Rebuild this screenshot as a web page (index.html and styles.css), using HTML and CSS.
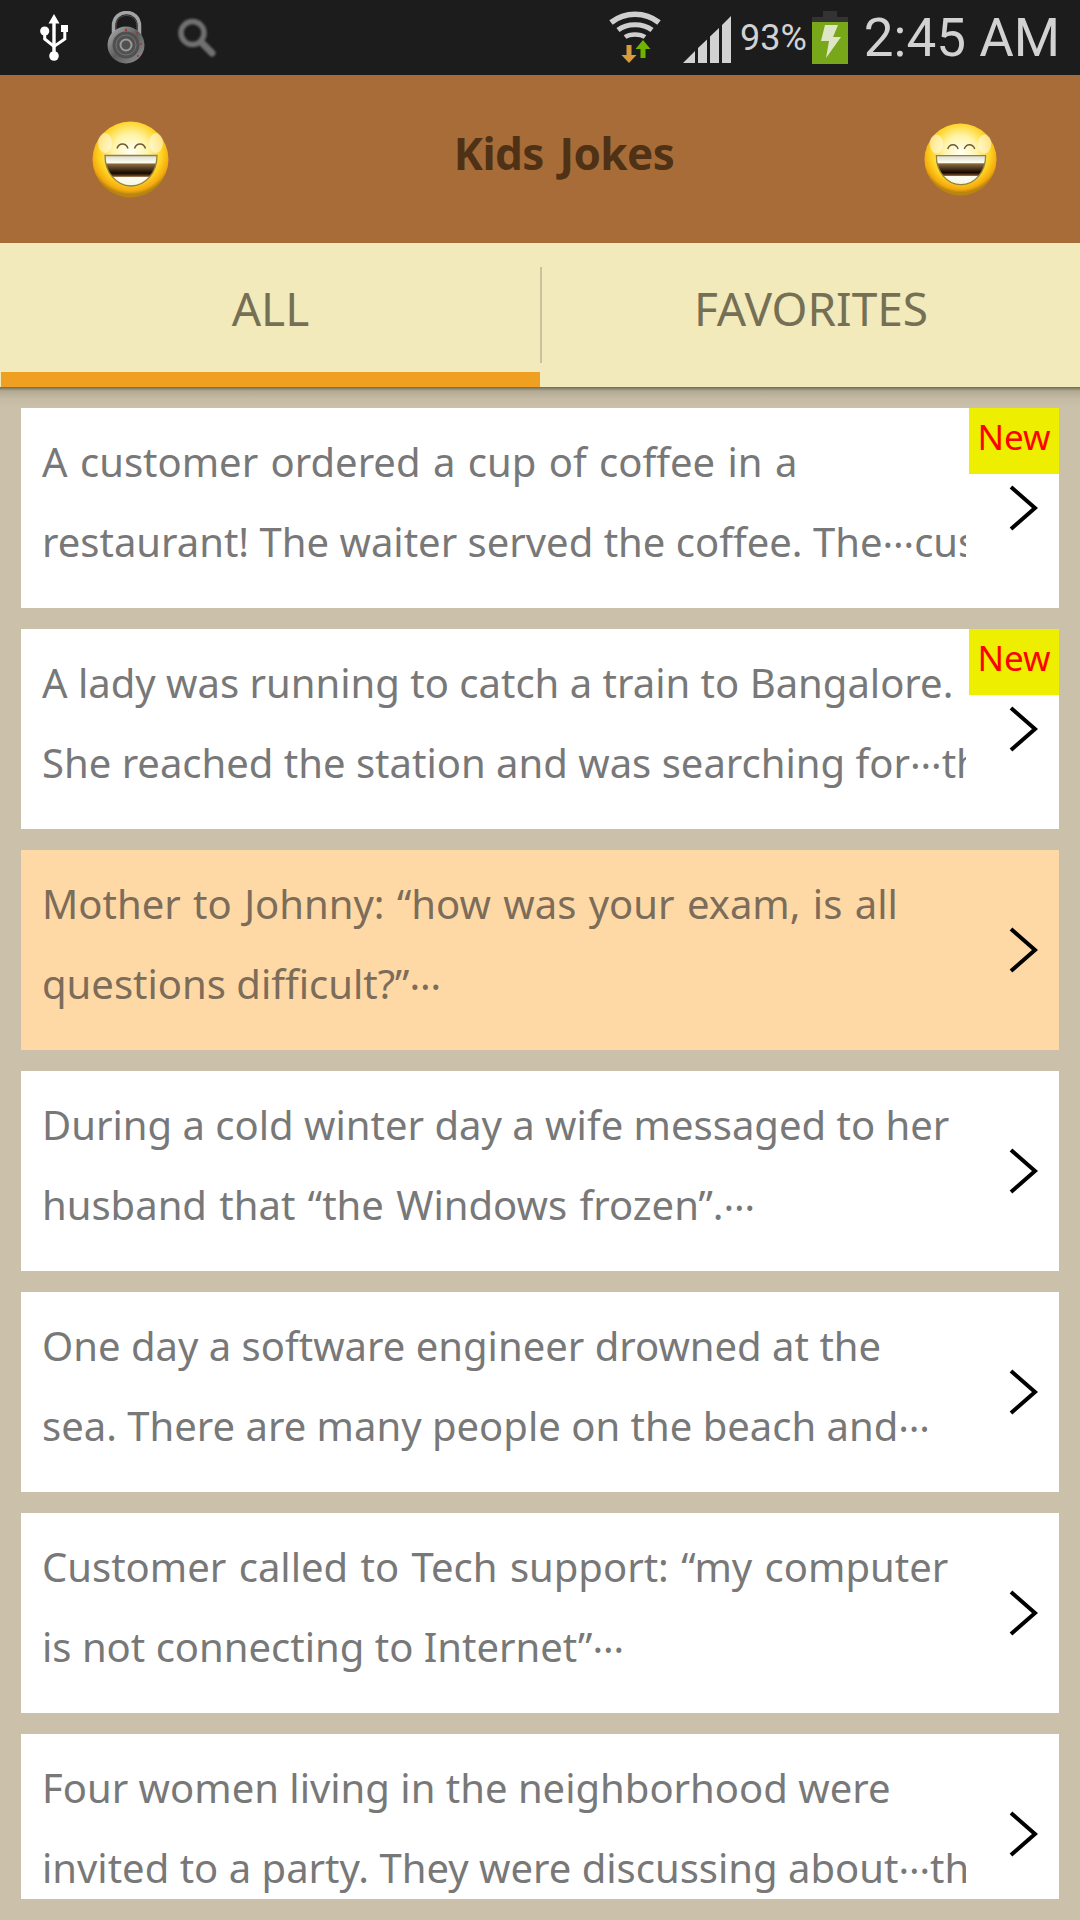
FILE: index.html
```html
<!doctype html>
<html lang="en">
  <head>
    <meta charset="utf-8">
    <title>Kids Jokes</title>
    <link rel="stylesheet" href="styles.css">
  </head>
  <body>

    <svg class="defs" width="0" height="0">
      <defs>
        <radialGradient id="faceFill" cx="50%" cy="40%" r="56%">
          <stop offset="0" stop-color="#fffff4"/>
          <stop offset="0.42" stop-color="#fff4a8"/>
          <stop offset="0.74" stop-color="#ffd21f"/>
          <stop offset="0.92" stop-color="#f4a90e"/>
          <stop offset="1" stop-color="#b98510"/>
        </radialGradient>
        <linearGradient id="mouthFill" x1="0" y1="0" x2="0" y2="1">
          <stop offset="0" stop-color="#dcdcd4"/>
          <stop offset="0.24" stop-color="#fdfdf0"/>
          <stop offset="0.28" stop-color="#8a6a40"/>
          <stop offset="0.58" stop-color="#140800"/>
          <stop offset="0.68" stop-color="#7a4a20"/>
          <stop offset="0.72" stop-color="#fdfdf0"/>
          <stop offset="1" stop-color="#f6f6e4"/>
        </linearGradient>
        <linearGradient id="lockFill" x1="0" y1="0" x2="1" y2="1">
          <stop offset="0" stop-color="#b4b4b4"/>
          <stop offset="0.5" stop-color="#5c5c5c"/>
          <stop offset="1" stop-color="#969696"/>
        </linearGradient>
        <symbol id="smiley" viewBox="0 0 77 77">
          <circle cx="38.500" cy="38.500" r="38" fill="url(#faceFill)"/>
          <ellipse cx="13" cy="22" rx="7" ry="10" fill="#fff" opacity=".5"/>
          <ellipse cx="64" cy="22" rx="7" ry="10" fill="#fff" opacity=".5"/>
          <path d="M25 27.500c2-6 9-6 11 0M42.500 27.500c2-6 9-6 11 0" fill="none" stroke="#6b5a3a" stroke-width="1.500"/>
          <path d="M13 34.500H65C65 51 54 65 39 65S13 51 13 34.500Z" fill="url(#mouthFill)" stroke="#93803c" stroke-width="1.300"/>
        </symbol>
      </defs>
    </svg>

    <div class="status-bar">
      <svg class="usb" width="32" height="50" viewBox="38 12 32 50">
        <path d="M54 14l-5.500 9.500h3.800V56h3.400V23.500h3.800Z" fill="#fff"/>
        <circle cx="54" cy="56" r="4.800" fill="#fff"/>
        <circle cx="44.700" cy="31" r="4.600" fill="#fff"/>
        <rect x="61" y="25" width="7" height="7" fill="#fff"/>
        <path d="M44.700 31v8l9.300 7.500 10.800-7.500v-8" fill="none" stroke="#fff" stroke-width="3"/>
      </svg>
      <svg class="lock" width="38" height="53" viewBox="107 11 38 53">
        <path d="M113.500 40V26c0-18 26-18 26 0v14" fill="none" stroke="#a4a4a4" stroke-width="3.500"/>
        <path d="M116 40V26c0-14 21-14 21 0v14" fill="none" stroke="#555" stroke-width="1"/>
        <circle cx="126" cy="45" r="18.500" fill="url(#lockFill)"/>
        <circle cx="126" cy="45" r="13.500" fill="#505050"/>
        <circle cx="126" cy="45" r="10" fill="none" stroke="#747474" stroke-width="1"/>
        <circle cx="126" cy="45" r="5.500" fill="none" stroke="#9a9a9a" stroke-width="2"/>
        <circle cx="126" cy="30" r="1.200" fill="#a33"/>
        <circle cx="141" cy="44" r="1" fill="#a33"/>
        <circle cx="137" cy="33" r="1" fill="#a33"/>
        <circle cx="138" cy="56" r="1" fill="#a33"/>
      </svg>
      <svg class="search" width="40" height="42" viewBox="177 17 40 42">
        <g fill="none" stroke="#7a7a7a" opacity=".9">
          <circle cx="192.500" cy="33" r="11.500" stroke-width="5.500"/>
          <path d="M202 43l10 10" stroke-width="7" stroke-linecap="round"/>
        </g>
      </svg>
      <div class="status-right">
        <svg class="wifi" width="54" height="54" viewBox="608 9 54 54">
          <g fill="none" stroke="#cfcfcf">
            <path d="M611 22.500c14-11 34-11 48 0" stroke-width="5.500"/>
            <path d="M618 30c9-7 25-7 34 0" stroke-width="5"/>
            <path d="M625 37c5-3.500 15-3.500 20 0" stroke-width="4.500"/>
          </g>
          <path d="M626.500 45h5v10h5l-7.500 8-7.500-8h5Z" fill="#d69a3f"/>
          <path d="M643 40l7.500 9h-5v9h-5v-9h-5Z" fill="#6fb300"/>
        </svg>
        <svg class="signal" width="48" height="47" viewBox="0 0 48 47">
          <path d="M0 47L12 35V47ZM15 47V32L24 23.500V47ZM27 47V20.500L36 12V47ZM39 47V9L48 0V47Z" fill="#d2d2d2"/>
        </svg>
        <span class="battery-text">93%</span>
        <svg class="battery" width="36" height="53" viewBox="0 0 36 53">
          <rect x="11" y="0" width="14" height="6" fill="#333"/>
          <rect x="0" y="6" width="36" height="5" fill="#333"/>
          <rect x="0" y="11" width="36" height="42" fill="#78a81a"/>
          <path d="M13 14h13l-5 12h8L14 47l3-17H9Z" fill="#dfe6c8"/>
        </svg>
        <span class="clock">2:45 AM</span>
      </div>
    </div>

    <header class="app-header">
      <svg class="smiley smiley-left"><use href="#smiley"/></svg>
      <h1 class="app-title">Kids Jokes</h1>
      <svg class="smiley smiley-right"><use href="#smiley"/></svg>
    </header>

    <nav class="tabs">
      <div class="tab tab-active">ALL</div>
      <div class="tab-divider"></div>
      <div class="tab">FAVORITES</div>
    </nav>

    <main class="joke-list">
      <article class="joke">
        <div class="joke-text">
          <p class="loose">A customer ordered a cup of coffee in a</p>
          <p>restaurant! The waiter served the coffee. The<span class="dots">…</span>customer</p>
        </div>
        <svg class="chevron" viewBox="0 0 30 46"><path d="M3 2l24 21L3 44" /></svg>
        <span class="badge">New</span>
      </article>
      <article class="joke">
        <div class="joke-text">
          <p>A lady was running to catch a train to Bangalore.</p>
          <p>She reached the station and was searching for<span class="dots">…</span>the</p>
        </div>
        <svg class="chevron" viewBox="0 0 30 46"><path d="M3 2l24 21L3 44" /></svg>
        <span class="badge">New</span>
      </article>
      <article class="joke joke-read">
        <div class="joke-text">
          <p class="loose">Mother to Johnny: “how was your exam, is all</p>
          <p>questions difficult?”<span class="dots">…</span></p>
        </div>
        <svg class="chevron" viewBox="0 0 30 46"><path d="M3 2l24 21L3 44" /></svg>
      </article>
      <article class="joke">
        <div class="joke-text">
          <p>During a cold winter day a wife messaged to her</p>
          <p class="loose">husband that “the Windows frozen”.<span class="dots">…</span></p>
        </div>
        <svg class="chevron" viewBox="0 0 30 46"><path d="M3 2l24 21L3 44" /></svg>
      </article>
      <article class="joke">
        <div class="joke-text">
          <p>One day a software engineer drowned at the</p>
          <p>sea. There are many people on the beach and<span class="dots">…</span></p>
        </div>
        <svg class="chevron" viewBox="0 0 30 46"><path d="M3 2l24 21L3 44" /></svg>
      </article>
      <article class="joke">
        <div class="joke-text">
          <p class="loose">Customer called to Tech support: “my computer</p>
          <p>is not connecting to Internet”<span class="dots">…</span></p>
        </div>
        <svg class="chevron" viewBox="0 0 30 46"><path d="M3 2l24 21L3 44" /></svg>
      </article>
      <article class="joke">
        <div class="joke-text">
          <p>Four women living in the neighborhood were</p>
          <p>invited to a party. They were discussing about<span class="dots">…</span>the</p>
        </div>
        <svg class="chevron" viewBox="0 0 30 46"><path d="M3 2l24 21L3 44" /></svg>
      </article>
    </main>

  </body>
</html>
```

FILE: styles.css
```css
* {
  margin: 0;
  padding: 0;
  box-sizing: border-box;
}

html, body {
  width: 1080px;
  height: 1920px;
  overflow: hidden;
}

body {
  display: flex;
  flex-direction: column;
  font-family: "Noto Sans", "Open Sans", sans-serif;
  background-color: #cbc0a9;
}

.defs {
  position: absolute;
}

/* status bar */
.status-bar {
  display: flex;
  flex: none;
  align-items: flex-start;
  height: 75px;
  padding-left: 38px;
  background-color: #1c1c1c;
}

.usb {
  margin-top: 12px;
}

.lock {
  margin-top: 11px;
  margin-left: 37px;
}

.search {
  margin-top: 17px;
  margin-left: 32px;
  filter: blur(1px);
}

.status-right {
  display: flex;
  align-items: flex-start;
  margin-left: auto;
  padding-right: 20px;
  color: #d2d2d2;
  font-family: Roboto, sans-serif;
}

.wifi {
  margin-top: 9px;
}

.signal {
  margin-top: 16px;
  margin-left: 21px;
}

.battery-text {
  margin-left: 9px;
  font-size: 36px;
  line-height: 76px;
}

.battery {
  margin-top: 11px;
  margin-left: 5px;
}

.clock {
  margin-left: 16px;
  font-size: 53px;
  line-height: 76px;
}

/* header */
.app-header {
  display: flex;
  flex: none;
  align-items: center;
  height: 168px;
  padding-left: 92px;
  padding-right: 83px;
  background-color: #a86c39;
}

.smiley {
  flex: none;
}

.smiley-left {
  width: 77px;
  height: 77px;
}

.smiley-right {
  width: 73px;
  height: 73px;
}

.app-title {
  flex: 1;
  padding-left: 35px;
  padding-bottom: 12px;
  text-align: center;
  font-size: 44px;
  font-weight: 700;
  letter-spacing: -0.6px;
  word-spacing: 5px;
  color: #4f3116;
}

/* tabs */
.tabs {
  display: flex;
  flex: none;
  height: 144px;
  background-color: #f2eaba;
}

.tab {
  flex: 1;
  padding-top: 34px;
  text-align: center;
  font-size: 46px;
  color: #757055;
}

.tab-active {
  flex: none;
  width: 539px;
  margin-left: 1px;
  border-bottom: 15px solid #f0a021;
}

.tab-divider {
  flex: none;
  width: 2px;
  height: 96px;
  margin-top: 24px;
  background-color: #c9c2a0;
}

/* list */
.joke-list {
  display: flex;
  flex-direction: column;
  flex: none;
  gap: 21px;
  height: 1512px;
  padding: 21px 21px 0;
  overflow: hidden;
  background: linear-gradient(#6e6a55, #b4aa93 4px, #c6bba4 12px, #cbc0a9 21px) no-repeat;
  background-size: 100% 21px;
}

.joke {
  display: flex;
  flex: none;
  align-items: center;
  position: relative;
  height: 200px;
  padding-left: 21px;
  background-color: #fff;
}

.joke-read {
  background-color: #fed9a6;
}

.joke-text {
  flex: none;
  width: 924px;
  margin-top: -12px;
  overflow: hidden;
  white-space: nowrap;
  font-size: 40px;
  line-height: 80px;
  color: #787878;
}

.joke-read .joke-text {
  color: #7c6c5a;
}

.loose {
  word-spacing: 2px;
}

/* the ellipsis sits higher in the original font */
.dots {
  vertical-align: 9px;
  line-height: 1;
}

.chevron {
  flex: none;
  width: 30px;
  height: 46px;
  margin-left: 42px;
  fill: none;
  stroke: #000;
  stroke-width: 4;
}

.badge {
  position: absolute;
  top: 0;
  right: 0;
  width: 90px;
  height: 66px;
  font-size: 35px;
  line-height: 58px;
  text-align: center;
  color: #f00;
  background-color: #eeee00;
}
```
